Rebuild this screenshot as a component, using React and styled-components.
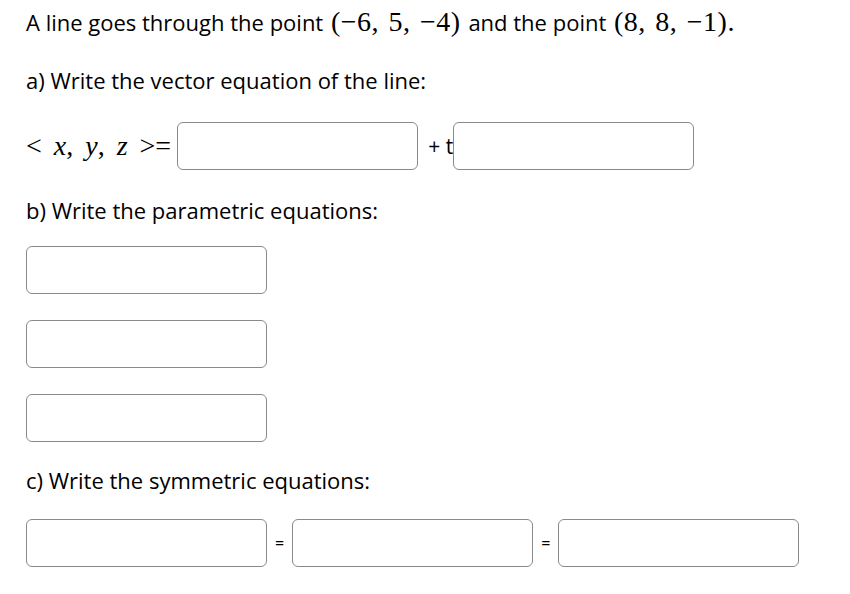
import React from "react";
import styled, { createGlobalStyle } from "styled-components";

const GlobalStyle = createGlobalStyle`
  body {
    margin: 0;
    background: #fff;
    color: #000;
    font-family: "Open Sans", "DejaVu Sans", sans-serif;
  }
`;

const Page = styled.div`
  padding: 8px 26px;
  font-size: 22px;
`;

const Para = styled.p`
  margin: 0;
  margin-top: ${(p) => p.$top || 0}px;
  line-height: 28px;
`;

const Math = styled.span`
  font-family: "Liberation Serif", "DejaVu Serif", serif;
  font-size: 28px;
  word-spacing: 2px;
  letter-spacing: 0.5px;
  margin: 0 2px;
`;

const Var = styled.i`
  font-family: "Liberation Serif", "DejaVu Serif", serif;
`;

const Row = styled.div`
  display: flex;
  align-items: center;
  margin-top: ${(p) => p.$top || 0}px;
`;

const Box = styled.input`
  width: 241px;
  height: 48px;
  box-sizing: border-box;
  border: 1px solid #8a8a8a;
  border-radius: 6px;
  margin: 0;
  margin-left: ${(p) => p.$shift || 0}px;
  padding: 0 6px;
  font-size: 18px;
  background: #fff;
`;

const Sep = styled.span`
  font-size: ${(p) => p.$size || 16}px;
  padding: 0 ${(p) => p.$pad ?? 8}px;
`;

const Label = styled.span`
  font-family: "Liberation Serif", "DejaVu Serif", serif;
  font-size: 28px;
  word-spacing: 5px;
  margin-right: 6px;
  white-space: pre;
`;

const Stack = styled.div`
  display: flex;
  flex-direction: column;
  gap: 26px;
  margin-top: 22px;
`;

export default function App() {
  return (
    <>
      <GlobalStyle />
      <Page>
        <Para>
          A line goes through the point <Math>(−6, 5, −4)</Math> and the point{" "}
          <Math>(8, 8, −1).</Math>
        </Para>
        <Para $top={30}>a) Write the vector equation of the line:</Para>
        <Row $top={28}>
          <Label>
            {"< "}
            <Var>x</Var>, <Var>y</Var>, <Var>z</Var>
            {" >="}
          </Label>
          <Box />
          <Sep $size={21} $pad={10}>+ t</Sep>
          <Box $shift={-10} />
        </Row>
        <Para $top={26}>b) Write the parametric equations:</Para>
        <Stack>
          <Box />
          <Box />
          <Box />
        </Stack>
        <Para $top={24}>c) Write the symmetric equations:</Para>
        <Row $top={25}>
          <Box />
          <Sep>=</Sep>
          <Box />
          <Sep>=</Sep>
          <Box />
        </Row>
      </Page>
    </>
  );
}
